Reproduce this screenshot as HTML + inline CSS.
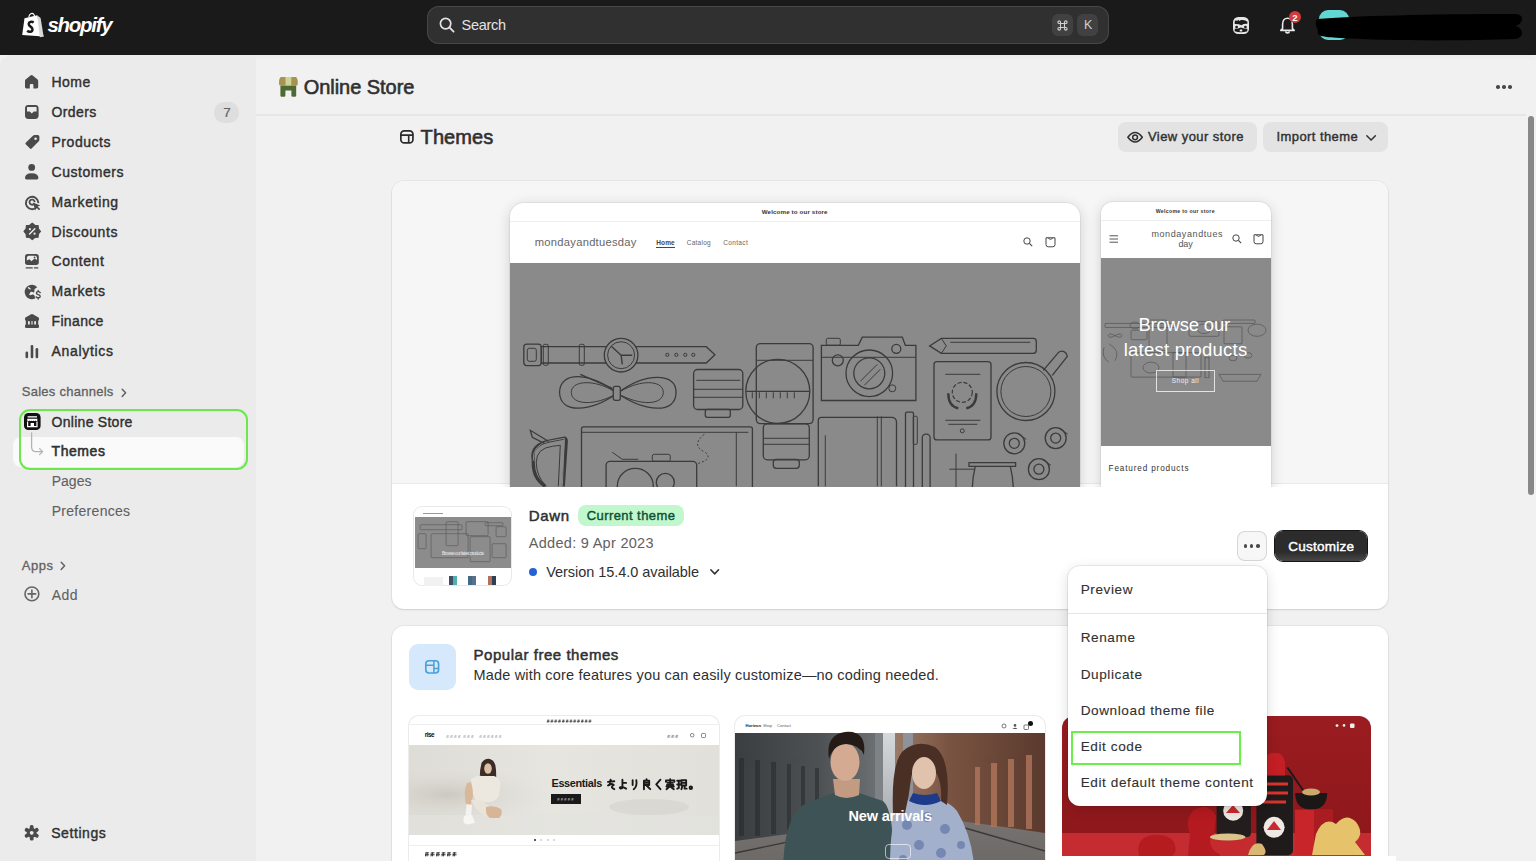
<!DOCTYPE html>
<html><head><meta charset="utf-8">
<style>
html,body{margin:0;padding:0;width:1536px;height:861px;overflow:hidden;background:#f1f1f1;}
body{position:relative;font-family:"Liberation Sans",sans-serif;}
.t{position:absolute;white-space:nowrap;}
.r{position:absolute;}
svg.r{overflow:visible;}
</style></head><body>
<div class="r" style="left:0px;top:0px;width:1536px;height:55px;background:#1a1a1a;"></div>
<svg class="r" style="left:21px;top:12px;" width="24" height="26" viewBox="0 0 24 26"><path d="M3.5 6.2 L16.2 3.2 L22.6 24.6 L1.2 23.0 Z" fill="#fff"/>
<path d="M16.2 3.2 L19.6 6.0 L22.6 24.6 L18.8 25.2 Z" fill="#d8d8d8"/>
<path d="M7.8 5.2 C8.2 1.5 11.2 0.6 12.6 2.2 C13.4 3.2 13.6 4.4 13.6 4.6" stroke="#fff" stroke-width="1.2" fill="none"/>
<path d="M12.6 10.6 C11 9.2 7.6 9.6 7.8 12.3 C8 14.8 11.8 14.6 11.5 17.6 C11.3 20.2 7.8 20.2 6.2 18.8" stroke="#1a1a1a" stroke-width="2.5" fill="none"/></svg>
<div class="t" style="left:47.4px;top:15.44px;font-size:20.5px;line-height:20.5px;font-weight:bold;color:#fff;letter-spacing:-1.282px;font-style:italic;">shopify</div>
<div class="r" style="left:427px;top:6px;width:682px;height:38px;background:#303030;border-radius:12px;box-shadow:inset 0 0 0 1px #474747;"></div>
<svg class="r" style="left:439px;top:17px;" width="16" height="16" viewBox="0 0 16 16"><circle cx="6.6" cy="6.6" r="5.2" stroke="#e3e3e3" stroke-width="1.7" fill="none"/><path d="M10.4 10.4 L14.6 14.6" stroke="#e3e3e3" stroke-width="1.8" stroke-linecap="round"/></svg>
<div class="t" style="left:461.5px;top:17.72px;font-size:14.5px;line-height:14.5px;color:#e3e3e3;letter-spacing:-0.289px;">Search</div>
<div class="r" style="left:1052px;top:14px;width:21px;height:22px;background:#414141;border-radius:6px;"></div>
<div class="r" style="left:1077px;top:14px;width:21px;height:22px;background:#414141;border-radius:6px;"></div>
<svg class="r" style="left:1056.5px;top:19.5px;" width="11" height="11" viewBox="0 0 11 11"><path d="M3.5 3.5 L7.5 3.5 L7.5 7.5 L3.5 7.5 Z M3.5 3.5 L3.5 2.2 A1.3 1.3 0 1 0 2.2 3.5 L3.5 3.5 M7.5 3.5 L7.5 2.2 A1.3 1.3 0 1 1 8.8 3.5 L7.5 3.5 M3.5 7.5 L3.5 8.8 A1.3 1.3 0 1 1 2.2 7.5 L3.5 7.5 M7.5 7.5 L7.5 8.8 A1.3 1.3 0 1 0 8.8 7.5 L7.5 7.5" stroke="#d0d0d0" stroke-width="1.1" fill="none"/></svg>
<div class="t" style="left:1084.0px;top:18.92px;font-size:12.5px;line-height:12.5px;color:#d0d0d0;">K</div>
<svg class="r" style="left:1232.5px;top:16.5px;" width="16" height="17.1" viewBox="0 0 16 17.1"><rect x="0" y="0" width="16" height="17.1" rx="5.2" fill="#e6e6e6"/><path d="M1.7 4.6 L3 2.9 L4 4.2 L5.2 2.7 L6.4 4 L8 3.1 Q12.4 2.6 14.4 4.8 L14.4 6.8 Q10.5 6.6 8.4 8.2 Q6 6.9 1.7 7 Z" fill="#1a1a1a"/><circle cx="3.6" cy="10" r="1.35" fill="#1a1a1a"/><circle cx="12.4" cy="10" r="1.35" fill="#1a1a1a"/><path d="M1.7 11.8 Q5 11.8 8 10.6 Q11 11.8 14.3 11.8 L14.3 14.3 Q8 16.2 1.7 14.3 Z" fill="#1a1a1a"/><rect x="6.7" y="12.4" width="2.6" height="2" rx="0.5" fill="#e6e6e6"/></svg>
<svg class="r" style="left:1278px;top:15px;" width="20" height="20" viewBox="0 0 20 20"><path d="M4.6 13.6 L4.6 9.2 C4.6 5.6 6.6 3.2 9.5 3.2 C12.4 3.2 14.4 5.6 14.4 9.2 L14.4 13.6 L16.2 15.4 L2.8 15.4 Z" stroke="#e8e8e8" stroke-width="1.6" fill="none" stroke-linejoin="round"/>
<path d="M7.6 16.4 C7.8 18.4 11.2 18.4 11.4 16.4" stroke="#e8e8e8" stroke-width="1.6" fill="none"/></svg>
<div class="r" style="left:1289.2px;top:11.3px;width:12px;height:12px;background:#d4393c;border-radius:50%;"></div>
<div class="t" style="left:1292.3px;top:13.26px;font-size:9.5px;line-height:9.5px;font-weight:bold;color:#fff;">2</div>
<div class="r" style="left:1319px;top:10px;width:30px;height:30px;background:#62d6d2;border-radius:9px;"></div>
<svg class="r" style="left:1310px;top:8px;" width="222" height="40" viewBox="0 0 222 40"><path d="M8 11 C40 8 120 6 205 6 C215 6 214 16 205 18 C214 20 215 30 205 31 C150 33 80 33 30 30 C12 29 6 28 8 22 C5 18 5 12 8 11 Z" fill="#000"/></svg>
<div class="r" style="left:0px;top:55px;width:256px;height:806px;background:#ebebeb;border-top-left-radius:12px;"></div>
<div class="r" style="left:256px;top:55px;width:1280px;height:806px;background:#f1f1f1;border-top-right-radius:12px;"></div>
<div class="r" style="left:256px;top:55px;width:1280px;height:5px;background:linear-gradient(#ebebeb,#efefef);border-top-right-radius:12px;"></div>
<div class="r" style="left:256px;top:114px;width:1270px;height:1.5px;background:#e6e6e6;"></div>
<div class="r" style="left:1527.5px;top:116px;width:6.5px;height:379px;background:#888;border-radius:3px;"></div>
<div class="t" style="left:51.5px;top:75.35px;font-size:14px;line-height:14px;-webkit-text-stroke:0.4px #303030;color:#303030;letter-spacing:0.485px;">Home</div>
<div class="t" style="left:51.5px;top:105.20px;font-size:14px;line-height:14px;-webkit-text-stroke:0.4px #303030;color:#303030;letter-spacing:0.402px;">Orders</div>
<div class="t" style="left:51.5px;top:135.05px;font-size:14px;line-height:14px;-webkit-text-stroke:0.4px #303030;color:#303030;letter-spacing:0.536px;">Products</div>
<div class="t" style="left:51.5px;top:164.90px;font-size:14px;line-height:14px;-webkit-text-stroke:0.4px #303030;color:#303030;letter-spacing:0.527px;">Customers</div>
<div class="t" style="left:51.5px;top:194.75px;font-size:14px;line-height:14px;-webkit-text-stroke:0.4px #303030;color:#303030;letter-spacing:0.641px;">Marketing</div>
<div class="t" style="left:51.5px;top:224.60px;font-size:14px;line-height:14px;-webkit-text-stroke:0.4px #303030;color:#303030;letter-spacing:0.554px;">Discounts</div>
<div class="t" style="left:51.5px;top:254.45px;font-size:14px;line-height:14px;-webkit-text-stroke:0.4px #303030;color:#303030;letter-spacing:0.544px;">Content</div>
<div class="t" style="left:51.5px;top:284.30px;font-size:14px;line-height:14px;-webkit-text-stroke:0.4px #303030;color:#303030;letter-spacing:0.602px;">Markets</div>
<div class="t" style="left:51.5px;top:314.15px;font-size:14px;line-height:14px;-webkit-text-stroke:0.4px #303030;color:#303030;letter-spacing:0.349px;">Finance</div>
<div class="t" style="left:51.5px;top:344.00px;font-size:14px;line-height:14px;-webkit-text-stroke:0.4px #303030;color:#303030;letter-spacing:0.672px;">Analytics</div>
<div class="r" style="left:214px;top:102px;width:25px;height:21px;background:#dedede;border-radius:10px;"></div>
<div class="t" style="left:223.3px;top:105.57px;font-size:13.5px;line-height:13.5px;-webkit-text-stroke:0.2px #616161;color:#616161;">7</div>
<div class="t" style="left:21.8px;top:385.09px;font-size:13px;line-height:13px;-webkit-text-stroke:0.3px #616161;color:#616161;letter-spacing:0.256px;">Sales channels</div>
<svg class="r" style="left:120.5px;top:387.5px;" width="6" height="10" viewBox="0 0 6 10"><path d="M1.2 1.2 L4.6 4.8 L1.2 8.4" stroke="#616161" stroke-width="1.5" fill="none" stroke-linecap="round" stroke-linejoin="round"/></svg>
<div class="r" style="left:13px;top:436.5px;width:231px;height:30px;background:#fafafa;border-radius:8px;"></div>
<div class="t" style="left:51.6px;top:414.95px;font-size:14px;line-height:14px;-webkit-text-stroke:0.4px #303030;color:#303030;letter-spacing:0.271px;">Online Store</div>
<div class="t" style="left:51.6px;top:444.05px;font-size:14px;line-height:14px;-webkit-text-stroke:0.55px #303030;color:#303030;letter-spacing:0.545px;">Themes</div>
<div class="t" style="left:51.7px;top:474.35px;font-size:14px;line-height:14px;-webkit-text-stroke:0.1px #616161;color:#616161;letter-spacing:0.026px;">Pages</div>
<div class="t" style="left:51.7px;top:504.25px;font-size:14px;line-height:14px;-webkit-text-stroke:0.1px #616161;color:#616161;letter-spacing:0.291px;">Preferences</div>
<div class="t" style="left:21.8px;top:558.59px;font-size:13px;line-height:13px;-webkit-text-stroke:0.3px #616161;color:#616161;letter-spacing:0.489px;">Apps</div>
<svg class="r" style="left:59.6px;top:561px;" width="6" height="10" viewBox="0 0 6 10"><path d="M1.2 1.2 L4.6 4.8 L1.2 8.4" stroke="#616161" stroke-width="1.5" fill="none" stroke-linecap="round" stroke-linejoin="round"/></svg>
<div class="t" style="left:51.7px;top:587.65px;font-size:14px;line-height:14px;-webkit-text-stroke:0.1px #616161;color:#616161;letter-spacing:0.494px;">Add</div>
<div class="t" style="left:51.2px;top:826.45px;font-size:14px;line-height:14px;-webkit-text-stroke:0.4px #303030;color:#303030;letter-spacing:0.573px;">Settings</div>
<svg class="r" style="left:25.4px;top:75.4px" width="13.2" height="13.4" viewBox="0 0 13.2 13.4"><path d="M5.5 0.5 Q6.6 -0.3 7.7 0.5 L12.6 4.6 Q13.2 5.1 13.2 6 L13.2 12 Q13.2 13.4 11.8 13.4 L8.4 13.4 L8.4 10 Q8.4 9 7.4 9 L5.8 9 Q4.8 9 4.8 10 L4.8 13.4 L1.4 13.4 Q0 13.4 0 12 L0 6 Q0 5.1 0.6 4.6 Z" fill="#4a4a4a"/></svg>
<svg class="r" style="left:25.2px;top:105.1px" width="13.6" height="14" viewBox="0 0 13.6 14"><rect x="0" y="0" width="13.6" height="14" rx="3.4" fill="#4a4a4a"/><path d="M2 2.6 Q2 2 2.6 2 L11 2 Q11.6 2 11.6 2.6 L11.6 6.6 L8.8 6.6 L6.8 8.4 L4.8 6.6 L2 6.6 Z" fill="#ebebeb"/></svg>
<svg class="r" style="left:24.9px;top:134.7px" width="14.4" height="14.3" viewBox="0 0 14.4 14.3"><path d="M8.2 0.6 Q8.8 0 9.6 0 L12.8 0 Q14.4 0 14.4 1.6 L14.4 4.8 Q14.4 5.6 13.8 6.2 L6.6 13.6 Q5.8 14.3 5 13.6 L0.7 9.3 Q0 8.5 0.7 7.7 Z" fill="#4a4a4a"/><circle cx="10.6" cy="3.8" r="1.3" fill="#ebebeb"/></svg>
<svg class="r" style="left:25.4px;top:164.4px" width="13.4" height="15.4" viewBox="0 0 13.4 15.4"><circle cx="6.7" cy="3.4" r="3.4" fill="#4a4a4a"/><path d="M0 14 Q0 9.3 6.7 9.3 Q13.4 9.3 13.4 14 Q13.4 15.4 12 15.4 L1.4 15.4 Q0 15.4 0 14 Z" fill="#4a4a4a"/></svg>
<svg class="r" style="left:25px;top:194.8px" width="16" height="16" viewBox="0 0 16 16"><path d="M11.5 12.4 A6.2 6.2 0 1 1 13.3 7.3" stroke="#4a4a4a" stroke-width="1.9" fill="none" stroke-linecap="round"/><path d="M8.7 9.2 A2.6 2.6 0 1 1 9.6 6.4" stroke="#4a4a4a" stroke-width="1.8" fill="none" stroke-linecap="round"/><path d="M7.8 7.4 L15.4 10.4 L12.6 11.4 L15.2 14 L14 15.2 L11.4 12.6 L10.4 15.4 Z" fill="#4a4a4a"/></svg>
<svg class="r" style="left:24px;top:223.2px" width="16.5" height="16.8" viewBox="0 0 16.5 16.8"><path d="M8.25 0.20 L10.78 2.30 L14.05 2.60 L14.35 5.87 L16.45 8.40 L14.35 10.93 L14.05 14.20 L10.78 14.50 L8.25 16.60 L5.72 14.50 L2.45 14.20 L2.15 10.93 L0.05 8.40 L2.15 5.87 L2.45 2.60 L5.72 2.30 Z" fill="#4a4a4a" stroke="#4a4a4a" stroke-width="1.2" stroke-linejoin="round"/><path d="M5.6 11 L10.8 5.8" stroke="#ebebeb" stroke-width="1.5" stroke-linecap="round"/><circle cx="5.9" cy="6.2" r="1.1" fill="#ebebeb"/><circle cx="10.6" cy="10.7" r="1.1" fill="#ebebeb"/></svg>
<svg class="r" style="left:25.2px;top:254.4px" width="13.8" height="14.6" viewBox="0 0 13.8 14.6"><rect x="0" y="0" width="13.8" height="10.9" rx="2.6" fill="#4a4a4a"/><path d="M1.8 4.6 Q1.8 1.8 4 1.8 L9.8 1.8 Q12 1.8 12 4 L12 6 L9.6 4.6 L6.4 7.2 L4.4 5.2 L1.8 6.6 Z" fill="#ebebeb"/><circle cx="9.6" cy="3.4" r="0.9" fill="#4a4a4a"/><rect x="0.6" y="13.2" width="7.2" height="1.3" rx="0.6" fill="#4a4a4a"/><rect x="8.8" y="13.2" width="4.6" height="1.3" rx="0.6" fill="#4a4a4a"/></svg>
<svg class="r" style="left:24.5px;top:284px" width="16.2" height="15.2" viewBox="0 0 16.2 15.2"><path d="M12.2 3.2 A7.2 7.2 0 1 0 10.4 14.2 L9.4 11.6 Q8.8 10.2 7.4 10.6 L5.4 11.2 Q4 11.4 4.4 10 L5.2 8.4 Q5.8 7.4 7 7.8 L8.6 8.4 Q9.4 8.6 9.4 7.6 L9.4 6 Q9.4 5 10.4 4.6 Z" fill="#4a4a4a"/><path d="M15.2 8.6 Q14.6 7.6 13.2 7.6 Q11.4 7.6 11.4 9 Q11.4 10.2 13.2 10.6 Q15.2 11 15.2 12.4 Q15.2 13.8 13.2 13.8 Q11.8 13.8 11.2 12.8 M13.2 6.4 L13.2 7.6 M13.2 13.8 L13.2 15" stroke="#4a4a4a" stroke-width="1.4" fill="none" stroke-linecap="round"/><path d="M3 3.4 L5.6 5.2" stroke="#ebebeb" stroke-width="1.3"/></svg>
<svg class="r" style="left:25px;top:313.7px" width="14" height="13.9" viewBox="0 0 14 13.9"><path d="M6.2 0.3 Q7 -0.1 7.8 0.3 L13.2 3.2 Q14 3.6 14 4.4 L14 5.4 Q14 6 13.4 6 L0.6 6 Q0 6 0 5.4 L0 4.4 Q0 3.6 0.8 3.2 Z" fill="#4a4a4a"/><rect x="0.8" y="6" width="2.2" height="5" fill="#4a4a4a"/><rect x="4.8" y="6" width="1.6" height="5" fill="#4a4a4a"/><rect x="7.6" y="6" width="1.6" height="5" fill="#4a4a4a"/><rect x="11" y="6" width="2.2" height="5" fill="#4a4a4a"/><rect x="0" y="10.4" width="14" height="3.5" rx="1.2" fill="#4a4a4a"/><rect x="0.6" y="6" width="12.8" height="1.2" fill="#4a4a4a"/></svg>
<svg class="r" style="left:24.8px;top:344.7px" width="14" height="13.2" viewBox="0 0 14 13.2"><rect x="0.5" y="6.4" width="2.6" height="6.8" rx="1.3" fill="#4a4a4a"/><rect x="5.7" y="0" width="2.6" height="13.2" rx="1.3" fill="#4a4a4a"/><rect x="10.6" y="3" width="2.6" height="10.2" rx="1.3" fill="#4a4a4a"/></svg>
<svg class="r" style="left:23.9px;top:412.9px" width="16.6" height="17.1" viewBox="0 0 16.6 17.1"><rect x="0" y="0" width="16.6" height="17.1" rx="4.4" fill="#111"/><rect x="3.6" y="3.2" width="9.4" height="1.3" fill="#fff"/><path d="M3.2 5.8 L13.4 5.8 L13.4 7.4 Q12.4 8.4 11.6 7.4 Q10.6 8.4 9.6 7.4 Q8.6 8.4 7.6 7.4 Q6.6 8.4 5.6 7.4 Q4.6 8.4 3.2 7.4 Z" fill="#fff"/><path d="M3.6 8.6 L3.6 13.6 L13 13.6 L13 8.6" stroke="#fff" stroke-width="1.2" fill="none"/><rect x="6.6" y="10" width="3.4" height="3.6" fill="#fff"/></svg>
<svg class="r" style="left:30px;top:432px" width="14" height="23" viewBox="0 0 14 23"><path d="M1.6 1 L1.6 15 Q1.6 19.6 6 19.6 L12.6 19.6 M9.6 16.6 L12.6 19.6 L9.6 22.6" stroke="#b3b3b3" stroke-width="1.3" fill="none" stroke-linecap="round" stroke-linejoin="round"/></svg>
<svg class="r" style="left:24px;top:586.4px" width="15.8" height="15.8" viewBox="0 0 15.8 15.8"><circle cx="7.9" cy="7.9" r="6.9" stroke="#666" stroke-width="1.6" fill="none"/><path d="M7.9 4.1 L7.9 11.7 M4.1 7.9 L11.7 7.9" stroke="#666" stroke-width="1.6" stroke-linecap="round"/></svg>
<svg class="r" style="left:24.2px;top:825.4px" width="15.4" height="15.6" viewBox="0 0 15.4 15.6"><g transform="translate(7.7 7.8)"><rect x="-1.9" y="-7.7" width="3.8" height="5" rx="1.6" transform="rotate(0)" fill="#4a4a4a"/><rect x="-1.9" y="-7.7" width="3.8" height="5" rx="1.6" transform="rotate(60)" fill="#4a4a4a"/><rect x="-1.9" y="-7.7" width="3.8" height="5" rx="1.6" transform="rotate(120)" fill="#4a4a4a"/><rect x="-1.9" y="-7.7" width="3.8" height="5" rx="1.6" transform="rotate(180)" fill="#4a4a4a"/><rect x="-1.9" y="-7.7" width="3.8" height="5" rx="1.6" transform="rotate(240)" fill="#4a4a4a"/><rect x="-1.9" y="-7.7" width="3.8" height="5" rx="1.6" transform="rotate(300)" fill="#4a4a4a"/><circle r="4.9" fill="#4a4a4a"/><circle r="1.9" fill="#ebebeb"/></g></svg>
<div class="r" style="left:18.6px;top:408.5px;width:229.4px;height:61px;border:2.6px solid #6ae84c;border-radius:11px;box-sizing:border-box;"></div>
<svg class="r" style="left:278.6px;top:76.9px;" width="18.8" height="19.8" viewBox="0 0 18.8 19.8"><path d="M1.6 0 L17.2 0 Q18.8 2 18.8 4.4 L18.8 7 Q18.8 8.8 17 8.8 L1.8 8.8 Q0 8.8 0 7 L0 4.4 Q0 2 1.6 0 Z" fill="#a89450"/><path d="M6.4 0 L12.4 0 L12.2 8.8 L6.6 8.8 Z" fill="#ccd49a"/><path d="M1.4 8.8 L17.2 8.8 L17.2 18.4 Q17.2 19.8 15.8 19.8 L13.8 19.8 Q12.4 19.8 12.4 18.4 L12.4 13.6 L6.4 13.6 L6.4 18.4 Q6.4 19.8 5 19.8 L2.8 19.8 Q1.4 19.8 1.4 18.4 Z" fill="#4d6a32"/></svg>
<div class="t" style="left:303.7px;top:76.87px;font-size:20px;line-height:20px;-webkit-text-stroke:0.6px #303030;color:#303030;letter-spacing:-0.043px;">Online Store</div>
<div class="r" style="left:1496.2px;top:85.1px;width:3.6px;height:3.6px;background:#4a4a4a;border-radius:50%;"></div>
<div class="r" style="left:1502.1000000000001px;top:85.1px;width:3.6px;height:3.6px;background:#4a4a4a;border-radius:50%;"></div>
<div class="r" style="left:1508.1000000000001px;top:85.1px;width:3.6px;height:3.6px;background:#4a4a4a;border-radius:50%;"></div>
<svg class="r" style="left:400.1px;top:130.1px;" width="13.8" height="13.7" viewBox="0 0 13.8 13.7"><rect x="0.85" y="0.85" width="12.1" height="12" rx="3.4" stroke="#2a2a2a" stroke-width="1.7" fill="none"/><path d="M0.8 5.1 L13 5.1 M8.7 5.1 L8.7 13" stroke="#2a2a2a" stroke-width="1.6"/></svg>
<div class="t" style="left:420.6px;top:127.17px;font-size:20px;line-height:20px;-webkit-text-stroke:0.6px #303030;color:#303030;letter-spacing:0.070px;">Themes</div>
<div class="r" style="left:1118.3px;top:122.2px;width:138.3px;height:29.6px;background:#e3e3e3;border-radius:8px;"></div>
<div class="r" style="left:1263.1px;top:122.2px;width:124.8px;height:29.6px;background:#e3e3e3;border-radius:8px;"></div>
<svg class="r" style="left:1126.8px;top:130.7px;" width="16.2" height="12.6" viewBox="0 0 16.2 12.6"><path d="M0.9 6.3 Q8.1 -3.2 15.3 6.3 Q8.1 15.8 0.9 6.3 Z" stroke="#303030" stroke-width="1.6" fill="none" stroke-linejoin="round"/><circle cx="8.1" cy="6.3" r="2.4" stroke="#303030" stroke-width="1.5" fill="none"/></svg>
<div class="t" style="left:1148.0px;top:130.19px;font-size:13px;line-height:13px;-webkit-text-stroke:0.4px #303030;color:#303030;letter-spacing:0.432px;">View your store</div>
<div class="t" style="left:1276.5px;top:130.29px;font-size:13px;line-height:13px;-webkit-text-stroke:0.4px #303030;color:#303030;letter-spacing:0.419px;">Import theme</div>
<svg class="r" style="left:1366.3px;top:135.1px;" width="10.2" height="5.9" viewBox="0 0 10.2 5.9"><path d="M0.8 0.8 L5.1 5.1 L9.4 0.8" stroke="#303030" stroke-width="1.5" fill="none" stroke-linecap="round" stroke-linejoin="round"/></svg>
<div class="r" style="left:391.5px;top:181px;width:996.5px;height:428px;background:#fff;border-radius:12px;box-shadow:0 0 0 1px rgba(0,0,0,0.045),0 1px 2px rgba(0,0,0,0.1);"></div>
<div class="r" style="left:391.5px;top:181px;width:996.5px;height:301.5px;background:#f6f6f6;border-radius:12px 12px 0 0;"></div>
<div class="r" style="left:391.5px;top:482.5px;width:996.5px;height:1.2px;background:#e9e9e9;"></div>
<div class="r" style="left:391.5px;top:181px;width:997px;height:305.5px;border-radius:12px 12px 0 0;overflow:hidden;">
<div class="r" style="left:118.19999999999999px;top:21.69999999999999px;width:570.6px;height:320px;background:#fff;border-radius:14px 14px 0 0;box-shadow:0 0 0 1px rgba(0,0,0,0.05),0 3px 14px rgba(0,0,0,0.16);overflow:hidden;">
<div class="t" style="left:252.0px;top:6.05px;font-size:6.2px;line-height:6.2px;font-weight:bold;color:#333;letter-spacing:0.143px;">Welcome to our store</div>
<div class="r" style="left:0px;top:18.7px;width:571px;height:0.8px;background:#eee;"></div>
<div class="t" style="left:25.1px;top:34.52px;font-size:11.2px;line-height:11.2px;color:#666;letter-spacing:0.263px;">mondayandtuesday</div>
<div class="t" style="left:146.5px;top:37.00px;font-size:6.5px;line-height:6.5px;font-weight:bold;color:#444;letter-spacing:0.147px;">Home</div>
<div class="r" style="left:146.5px;top:44.3px;width:18.6px;height:0.8px;background:#444;"></div>
<div class="t" style="left:177.0px;top:37.00px;font-size:6.5px;line-height:6.5px;color:#666;letter-spacing:0.266px;">Catalog</div>
<div class="t" style="left:213.5px;top:37.00px;font-size:6.5px;line-height:6.5px;color:#666;letter-spacing:0.350px;">Contact</div>
<svg class="r" style="left:513.8px;top:34.8px;" width="10" height="10" viewBox="0 0 10 10"><circle cx="4" cy="4" r="3.2" stroke="#444" stroke-width="1" fill="none"/><path d="M6.4 6.4 L9.2 9.2" stroke="#444" stroke-width="1.1"/></svg>
<svg class="r" style="left:535.5px;top:34.8px;" width="11" height="10.5" viewBox="0 0 11 10.5"><path d="M1 0.8 L10 0.8 L10 7.6 Q10 9.8 7.8 9.8 L3.2 9.8 Q1 9.8 1 7.6 Z M3.2 0.8 Q5.5 4 7.8 0.8" stroke="#444" stroke-width="1" fill="none"/></svg>
<div class="r" style="left:0px;top:60.5px;width:571px;height:260px;background:#8a8a8a;"></div>
<svg class="r" style="left:0px;top:0px;pointer-events:none;" width="571" height="320" viewBox="0 0 571 320"><rect x="13.800000000000011" y="141.10000000000002" width="17.5" height="21.5" rx="3" stroke="#3b3b3b" stroke-width="1.3" fill="none"/><rect x="17.30000000000001" y="145.3" width="9" height="13" rx="2" stroke="#3b3b3b" stroke-width="1" fill="none"/><path d="M31.30000000000001 143.7 L196.3 143.7 L204.90000000000003 151.8 L196.3 160.0 L31.30000000000001 160.0 Z" stroke="#3b3b3b" stroke-width="1.3" fill="none"/><rect x="33.30000000000001" y="141.3" width="5" height="21" rx="1.5" stroke="#3b3b3b" stroke-width="1" fill="none"/><rect x="69.30000000000001" y="141.3" width="5" height="21" rx="1.5" stroke="#3b3b3b" stroke-width="1" fill="none"/><circle cx="111.09999999999997" cy="152.2" r="16.8" fill="#8a8a8a" stroke="#3b3b3b" stroke-width="1.3" fill="none"/><circle cx="111.09999999999997" cy="152.2" r="13.5" stroke="#3b3b3b" stroke-width="1" fill="none"/><path d="M111.09999999999997 152.2 L101.30000000000001 143.3 M111.09999999999997 152.2 L122.30000000000001 152.2 M111.09999999999997 152.2 L112.30000000000001 161.3" stroke="#3b3b3b" stroke-width="1.4"/><circle cx="157.3" cy="151.8" r="1.6" stroke="#3b3b3b" stroke-width="1" fill="none"/><circle cx="166.3" cy="151.8" r="1.6" stroke="#3b3b3b" stroke-width="1" fill="none"/><circle cx="175.3" cy="151.8" r="1.6" stroke="#3b3b3b" stroke-width="1" fill="none"/><circle cx="183.3" cy="151.8" r="1.6" stroke="#3b3b3b" stroke-width="1" fill="none"/><path d="M107.30000000000001 190.3 C80.30000000000001 169.3 50.30000000000001 167.3 49.50000000000006 189.3 C50.30000000000001 211.3 80.30000000000001 209.3 107.30000000000001 190.3 C135.3 169.3 166.3 169.3 166.00000000000006 189.3 C166.3 211.3 135.3 209.3 107.30000000000001 190.3 Z" stroke="#3b3b3b" stroke-width="1.3" fill="none"/><path d="M107.30000000000001 190.3 C85.30000000000001 175.3 61.30000000000001 177.3 61.30000000000001 189.3 C61.30000000000001 202.3 85.30000000000001 203.3 107.30000000000001 190.3 C130.3 175.3 153.3 177.3 153.3 189.3 C153.3 202.3 130.3 203.3 107.30000000000001 190.3" stroke="#3b3b3b" stroke-width="1" fill="none"/><rect x="103.30000000000001" y="183.3" width="7" height="14" rx="2" fill="#8a8a8a" stroke="#3b3b3b" stroke-width="1.3" fill="none"/><path d="M70.30000000000001 171.3 L102.30000000000001 185.3" stroke="#3b3b3b" stroke-width="1.3" fill="none"/><rect x="183.59999999999997" y="166.5" width="49.2" height="40" rx="4" stroke="#3b3b3b" stroke-width="1.3" fill="none"/><path d="M183.59999999999997 186.3 L232.8 186.3 M183.59999999999997 194.3 L232.8 194.3 M186.3 177.3 L230.3 177.3" stroke="#3b3b3b" stroke-width="1" fill="none"/><rect x="195.3" y="206.3" width="25" height="8" rx="2" stroke="#3b3b3b" stroke-width="1.3" fill="none"/><rect x="246.3" y="140.60000000000002" width="56.8" height="80" rx="4" stroke="#3b3b3b" stroke-width="1.3" fill="none"/><path d="M246.3 157.3 L303.09999999999997 157.3" stroke="#3b3b3b" stroke-width="1" fill="none"/><rect x="253.3" y="220.8" width="46" height="36" rx="4" stroke="#3b3b3b" stroke-width="1.3" fill="none"/><path d="M253.3 235.3 L299.3 235.3 M253.3 241.3 L299.3 241.3" stroke="#3b3b3b" stroke-width="1" fill="none"/><rect x="263.3" y="256.3" width="26" height="9" rx="3" stroke="#3b3b3b" stroke-width="1.3" fill="none"/><circle cx="267.8" cy="188.3" r="32" fill="#8a8a8a" fill-opacity="0.0" stroke="#3b3b3b" stroke-width="1.3" fill="none"/><path d="M236.3 188.3 L299.3 188.3" stroke="#3b3b3b" stroke-width="1.3" fill="none"/><path d="M242.3 189.3 L242.3 195.3" stroke="#3b3b3b" stroke-width="1" fill="none"/><path d="M249.3 189.3 L249.3 195.3" stroke="#3b3b3b" stroke-width="1" fill="none"/><path d="M256.3 189.3 L256.3 195.3" stroke="#3b3b3b" stroke-width="1" fill="none"/><path d="M263.3 189.3 L263.3 195.3" stroke="#3b3b3b" stroke-width="1" fill="none"/><path d="M270.3 189.3 L270.3 195.3" stroke="#3b3b3b" stroke-width="1" fill="none"/><path d="M277.3 189.3 L277.3 195.3" stroke="#3b3b3b" stroke-width="1" fill="none"/><path d="M284.3 189.3 L284.3 195.3" stroke="#3b3b3b" stroke-width="1" fill="none"/><path d="M38.30000000000001 238.3 L53.30000000000001 235.3 Q56.30000000000001 234.3 56.30000000000001 238.3 L53.30000000000001 283.3 M23.30000000000001 257.3 Q20.30000000000001 242.3 38.30000000000001 238.3 M23.30000000000001 257.3 Q22.30000000000001 275.3 35.30000000000001 283.3" stroke="#3b3b3b" stroke-width="3.2" fill="none"/><path d="M38.30000000000001 238.3 L54.30000000000001 235.3 L52.30000000000001 283.3 M23.30000000000001 257.3 Q22.30000000000001 242.3 38.30000000000001 238.3" stroke="#8a8a8a" stroke-width="1" fill="none"/><path d="M38.30000000000001 238.3 L20.30000000000001 227.3 L22.30000000000001 234.3 L34.30000000000001 240.3" stroke="#3b3b3b" stroke-width="1.3" fill="none"/><path d="M26.30000000000001 259.3 Q26.30000000000001 245.3 42.30000000000001 243.3 L50.30000000000001 242.3 L48.30000000000001 283.3 M26.30000000000001 259.3 Q26.30000000000001 273.3 36.30000000000001 283.3" stroke="#3b3b3b" stroke-width="1" fill="none"/><rect x="71.50000000000006" y="223.90000000000003" width="170.9" height="80" rx="2" stroke="#3b3b3b" stroke-width="1.3" fill="none"/><path d="M71.50000000000006 229.3 L238.3 229.3 M226.3 229.3 L226.3 283.3" stroke="#3b3b3b" stroke-width="1" fill="none"/><path d="M194.3 231.3 Q180.3 242.3 195.3 249.3 Q205.3 257.3 180.3 262.3" stroke="#3b3b3b" stroke-width="1" fill="none" stroke-dasharray="2 2"/><rect x="96.09999999999997" y="258.3" width="90.6" height="40" rx="4" fill="#8a8a8a" stroke="#3b3b3b" stroke-width="1.3" fill="none"/><circle cx="125.30000000000001" cy="283.3" r="18" stroke="#3b3b3b" stroke-width="1.3" fill="none"/><circle cx="155.3" cy="279.3" r="9" stroke="#3b3b3b" stroke-width="1.3" fill="none"/><rect x="142.3" y="251.3" width="18" height="7" rx="2" stroke="#3b3b3b" stroke-width="1" fill="none"/><path d="M102.30000000000001 249.3 L112.30000000000001 256.3 L128.3 256.3" stroke="#3b3b3b" stroke-width="1" fill="none"/><path d="M311.40000000000003 142.3 L348.3 142.3 L352.3 134.10000000000002 L392.3 134.10000000000002 L395.3 142.3 L405.90000000000003 142.3 L405.90000000000003 197.5 L311.40000000000003 197.5 Z" stroke="#3b3b3b" stroke-width="1.3" fill="none"/><path d="M311.40000000000003 154.3 L405.90000000000003 154.3" stroke="#3b3b3b" stroke-width="1" fill="none"/><rect x="316.3" y="135.3" width="14" height="7" rx="1.5" stroke="#3b3b3b" stroke-width="1" fill="none"/><circle cx="359.3" cy="170.3" r="23.3" stroke="#3b3b3b" stroke-width="1.3" fill="none"/><circle cx="359.3" cy="170.3" r="15.5" stroke="#3b3b3b" stroke-width="1.3" fill="none"/><path d="M350.3 178.3 L367.3 161.3 M354.3 182.3 L370.3 166.3" stroke="#3b3b3b" stroke-width="1" fill="none"/><circle cx="327.8" cy="157.3" r="5.5" stroke="#3b3b3b" stroke-width="1.3" fill="none"/><circle cx="386.3" cy="145.8" r="4.5" stroke="#3b3b3b" stroke-width="1.3" fill="none"/><circle cx="382.3" cy="185.3" r="3.5" stroke="#3b3b3b" stroke-width="1" fill="none"/><path d="M431.3 135.40000000000003 L523.3 135.40000000000003 Q526.3 135.40000000000003 526.3 138.3 L526.3 147.3 Q526.3 150.40000000000003 523.3 150.40000000000003 L431.3 150.40000000000003 L419.59999999999997 142.90000000000003 Z" stroke="#3b3b3b" stroke-width="1.3" fill="none"/><path d="M431.3 135.40000000000003 L436.3 142.90000000000003 L431.3 150.40000000000003 M440.3 139.3 L520.3 139.3" stroke="#3b3b3b" stroke-width="1" fill="none"/><rect x="424.00000000000006" y="158.7" width="57" height="78.2" rx="3" stroke="#3b3b3b" stroke-width="1.3" fill="none"/><path d="M435.3 171.3 L470.3 171.3 M435.3 217.3 L470.3 217.3 M438.3 221.3 L467.3 221.3" stroke="#3b3b3b" stroke-width="1" fill="none"/><circle cx="452.3" cy="189.3" r="10" stroke="#3b3b3b" stroke-width="1.2" fill="none" stroke-dasharray="4 2"/><path d="M438.3 190.3 Q438.3 203.3 448.3 205.3 M466.3 190.3 Q466.3 203.3 456.3 205.3" stroke="#3b3b3b" stroke-width="2.4" fill="none"/><circle cx="452.3" cy="227.8" r="2" stroke="#3b3b3b" stroke-width="1" fill="none"/><path d="M533.3 167.3 L548.3 149.60000000000002 Q552.3 146.3 556.0999999999999 150.3 L557.3 153.3 L542.3 172.3" stroke="#3b3b3b" stroke-width="1.3" fill="none"/><circle cx="515.8999999999999" cy="188.5" r="29" stroke="#3b3b3b" stroke-width="1.3" fill="none"/><circle cx="515.8999999999999" cy="188.5" r="25" stroke="#3b3b3b" stroke-width="1" fill="none"/><circle cx="504.3" cy="240.3" r="10.5" stroke="#3b3b3b" stroke-width="1.3" fill="none"/><circle cx="504.3" cy="240.3" r="5" stroke="#3b3b3b" stroke-width="1.3" fill="none"/><path d="M507.3 230.3 L516.3 236.3" stroke="#3b3b3b" stroke-width="1" fill="none"/><circle cx="545.7" cy="235.10000000000002" r="10.5" stroke="#3b3b3b" stroke-width="1.3" fill="none"/><circle cx="545.7" cy="235.10000000000002" r="5" stroke="#3b3b3b" stroke-width="1.3" fill="none"/><path d="M548.7 225.10000000000002 L557.7 231.10000000000002" stroke="#3b3b3b" stroke-width="1" fill="none"/><circle cx="528.8999999999999" cy="266.2" r="10.5" stroke="#3b3b3b" stroke-width="1.3" fill="none"/><circle cx="528.8999999999999" cy="266.2" r="5" stroke="#3b3b3b" stroke-width="1.3" fill="none"/><path d="M531.8999999999999 256.2 L540.8999999999999 262.2" stroke="#3b3b3b" stroke-width="1" fill="none"/><path d="M308.3 283.3 L308.3 217.3 Q308.3 214.3 311.3 214.3 L381.3 214.3 Q386.50000000000006 214.3 386.50000000000006 219.3 L386.50000000000006 283.3" stroke="#3b3b3b" stroke-width="1.3" fill="none"/><path d="M367.3 213.3 L367.3 283.3 M371.3 213.3 L371.3 283.3 M315.3 232.3 L315.3 283.3" stroke="#3b3b3b" stroke-width="1" fill="none"/><rect x="395.50000000000006" y="209.2" width="8" height="80" rx="1.5" stroke="#3b3b3b" stroke-width="1.3" fill="none"/><rect x="403.3" y="213.3" width="4" height="28" rx="1" stroke="#3b3b3b" stroke-width="1" fill="none"/><rect x="412.3" y="231.2" width="7.8" height="60" rx="3.5" stroke="#3b3b3b" stroke-width="1.3" fill="none"/><path d="M459.00000000000006 259.7 L505.59999999999997 259.7 L505.59999999999997 263.3 L459.00000000000006 263.3 Z M465.3 263.3 Q462.3 275.3 462.3 287.3 M500.3 263.3 Q503.3 275.3 503.3 287.3" stroke="#3b3b3b" stroke-width="1.3" fill="none"/><path d="M446.00000000000006 250.60000000000002 L446.00000000000006 287.3 M439.3 266.2 L464.09999999999997 266.2" stroke="#3b3b3b" stroke-width="1" fill="none"/></svg>
</div>
<div class="r" style="left:709.7px;top:21.30000000000001px;width:169.5px;height:320px;background:#fff;border-radius:12px 12px 0 0;box-shadow:0 0 0 1px rgba(0,0,0,0.05),0 3px 14px rgba(0,0,0,0.16);overflow:hidden;">
<div class="t" style="left:54.5px;top:6.90px;font-size:5.2px;line-height:5.2px;font-weight:bold;color:#333;letter-spacing:0.312px;">Welcome to our store</div>
<div class="r" style="left:0px;top:17.8px;width:170px;height:0.8px;background:#eee;"></div>
<svg class="r" style="left:7.6px;top:32.6px;" width="10" height="8" viewBox="0 0 10 8"><path d="M0.5 0.8 L9 0.8 M0.5 4 L9 4 M0.5 7.2 L9 7.2" stroke="#555" stroke-width="1"/></svg>
<div class="t" style="left:50.2px;top:27.98px;font-size:9px;line-height:9px;color:#555;letter-spacing:0.596px;">mondayandtues</div>
<div class="t" style="left:77.2px;top:37.58px;font-size:9px;line-height:9px;color:#555;letter-spacing:-0.006px;">day</div>
<svg class="r" style="left:131px;top:31.5px;" width="10" height="10" viewBox="0 0 10 10"><circle cx="4" cy="4" r="3.2" stroke="#444" stroke-width="1" fill="none"/><path d="M6.4 6.4 L9.2 9.2" stroke="#444" stroke-width="1.1"/></svg>
<svg class="r" style="left:152.3px;top:31.5px;" width="11" height="10.5" viewBox="0 0 11 10.5"><path d="M1 0.8 L10 0.8 L10 7.6 Q10 9.8 7.8 9.8 L3.2 9.8 Q1 9.8 1 7.6 Z M3.2 0.8 Q5.5 4 7.8 0.8" stroke="#444" stroke-width="1" fill="none"/></svg>
<div class="r" style="left:0px;top:56px;width:170px;height:187.5px;background:#8a8a8a;"></div>
<svg class="r" style="left:0px;top:0px;" width="170" height="320" viewBox="0 0 170 320"><g transform="translate(0 118) scale(1 0.68) translate(0 -120)"><rect x="4" y="125" width="70" height="6" rx="1" stroke="#4a4a4a" stroke-width="0.7" fill="none"/><circle cx="34" cy="128" r="5" stroke="#4a4a4a" stroke-width="0.7" fill="none"/><path d="M14 143 C5 135 5 151 14 143 C23 135 23 151 14 143" stroke="#4a4a4a" stroke-width="0.7" fill="none"/><rect x="30" y="135" width="16" height="14" rx="2" stroke="#4a4a4a" stroke-width="0.7" fill="none"/><rect x="48" y="120" width="18" height="45" rx="2" stroke="#4a4a4a" stroke-width="0.7" fill="none"/><rect x="88" y="122" width="30" height="22" rx="2" stroke="#4a4a4a" stroke-width="0.7" fill="none"/><circle cx="103" cy="133" r="7" stroke="#4a4a4a" stroke-width="0.7" fill="none"/><rect x="122" y="120" width="32" height="5" rx="1" stroke="#4a4a4a" stroke-width="0.7" fill="none"/><rect x="123" y="130" width="18" height="25" rx="1" stroke="#4a4a4a" stroke-width="0.7" fill="none"/><circle cx="156" cy="135" r="9" stroke="#4a4a4a" stroke-width="0.7" fill="none"/><path d="M8 155 Q20 165 14 180 M3 160 Q0 175 8 182" stroke="#4a4a4a" stroke-width="0.7" fill="none"/><rect x="30" y="168" width="55" height="36" rx="1" stroke="#4a4a4a" stroke-width="0.7" fill="none"/><circle cx="50" cy="190" r="8" stroke="#4a4a4a" stroke-width="0.7" fill="none"/><rect x="72" y="168" width="28" height="36" rx="1" stroke="#4a4a4a" stroke-width="0.7" fill="none"/><rect x="104" y="175" width="4" height="30" stroke="#4a4a4a" stroke-width="0.7" fill="none"/><circle cx="132" cy="176" r="4" stroke="#4a4a4a" stroke-width="0.7" fill="none"/><circle cx="147" cy="172" r="4" stroke="#4a4a4a" stroke-width="0.7" fill="none"/><path d="M118 200 L160 200 L156 210 L122 210 Z" stroke="#4a4a4a" stroke-width="0.7" fill="none"/></g></svg>
<div class="t" style="left:37.2px;top:113.64px;font-size:18.5px;line-height:18.5px;color:#fff;letter-spacing:-0.197px;font-weight:300;">Browse our</div>
<div class="t" style="left:22.5px;top:138.64px;font-size:18.5px;line-height:18.5px;color:#fff;letter-spacing:0.227px;">latest products</div>
<div class="r" style="left:54.8px;top:167.8px;width:59px;height:22px;border:1px solid rgba(255,255,255,0.75);box-sizing:border-box;"></div>
<div class="t" style="left:70.5px;top:176.00px;font-size:6.5px;line-height:6.5px;color:#eee;letter-spacing:0.501px;">Shop all</div>
<div class="t" style="left:7.4px;top:262.56px;font-size:8.2px;line-height:8.2px;color:#333;letter-spacing:0.841px;">Featured products</div>
</div>
</div>
<div class="r" style="left:413.9px;top:507.3px;width:97.3px;height:78.2px;background:#fff;border-radius:8px;box-shadow:0 0 0 1px rgba(0,0,0,0.09);overflow:hidden;"></div>
<div class="r" style="left:414.5px;top:516.9px;width:96px;height:51px;background:#8c8c8c;"></div>
<div class="r" style="left:424px;top:577px;width:19px;height:8.5px;background:#f1f1f1;"></div>
<div class="r" style="left:449px;top:576px;width:4px;height:9px;background:#3e4f66;"></div>
<div class="r" style="left:453px;top:576px;width:4px;height:9px;background:#4fb0b0;"></div>
<div class="r" style="left:468px;top:576px;width:4px;height:9px;background:#3f6b86;"></div>
<div class="r" style="left:472px;top:576px;width:4px;height:9px;background:#5a6f88;"></div>
<div class="r" style="left:488px;top:576px;width:4px;height:9px;background:#b0725a;"></div>
<div class="r" style="left:492px;top:576px;width:4px;height:9px;background:#2f3f55;"></div>
<div class="r" style="left:423px;top:512.7px;width:20px;height:1px;background:#999;"></div>
<svg class="r" style="left:413.9px;top:507.3px;" width="97.3" height="78.2" viewBox="0 0 97.3 78.2"><rect x="6.100000000000023" y="17.69999999999999" width="42" height="5" rx="1" stroke="#555" stroke-width="0.6" fill="none"/><rect x="32.10000000000002" y="14.699999999999989" width="12" height="24" rx="1" stroke="#555" stroke-width="0.6" fill="none"/><rect x="52.10000000000002" y="14.699999999999989" width="22" height="14" rx="1" stroke="#555" stroke-width="0.6" fill="none"/><rect x="71.10000000000002" y="15.699999999999989" width="18" height="3" rx="1" stroke="#555" stroke-width="0.6" fill="none"/><rect x="82.10000000000002" y="19.69999999999999" width="10" height="10" rx="1" stroke="#555" stroke-width="0.6" fill="none"/><rect x="4.100000000000023" y="26.69999999999999" width="8" height="15" rx="1" stroke="#555" stroke-width="0.6" fill="none"/><rect x="17.100000000000023" y="26.69999999999999" width="37" height="24" rx="1" stroke="#555" stroke-width="0.6" fill="none"/><rect x="56.10000000000002" y="29.69999999999999" width="20" height="25" rx="1" stroke="#555" stroke-width="0.6" fill="none"/><rect x="78.10000000000002" y="36.69999999999999" width="14" height="14" rx="1" stroke="#555" stroke-width="0.6" fill="none"/></svg>
<div class="t" style="left:442.0px;top:551.69px;font-size:4.5px;line-height:4.5px;color:#eee;letter-spacing:-0.451px;">Browse our latest products</div>
<div class="t" style="left:528.8px;top:508.10px;font-size:15px;line-height:15px;-webkit-text-stroke:0.5px #303030;color:#303030;letter-spacing:0.650px;">Dawn</div>
<div class="r" style="left:578.2px;top:504.8px;width:106px;height:21.1px;background:#c1f7cd;border-radius:8px;"></div>
<div class="t" style="left:586.7px;top:508.99px;font-size:13px;line-height:13px;-webkit-text-stroke:0.4px #0c5132;color:#0c5132;letter-spacing:0.434px;">Current theme</div>
<div class="t" style="left:528.8px;top:536.32px;font-size:14.5px;line-height:14.5px;color:#616161;letter-spacing:0.286px;">Added: 9 Apr 2023</div>
<div class="r" style="left:528.5px;top:567.8px;width:8.6px;height:8.6px;background:#2463d1;border-radius:50%;"></div>
<div class="t" style="left:546.2px;top:565.12px;font-size:14.5px;line-height:14.5px;color:#303030;letter-spacing:-0.047px;">Version 15.4.0 available</div>
<svg class="r" style="left:710.3px;top:569.4px;" width="9.4" height="6.2" viewBox="0 0 9.4 6.2"><path d="M0.8 0.8 L4.7 4.9 L8.6 0.8" stroke="#303030" stroke-width="1.5" fill="none" stroke-linecap="round" stroke-linejoin="round"/></svg>
<div class="r" style="left:1237.2px;top:530.9px;width:29.4px;height:29.7px;background:#f7f7f7;border-radius:8px;box-shadow:inset 0 0 0 1px #d6d6d6;"></div>
<div class="r" style="left:1243.7px;top:544.2px;width:3.6px;height:3.6px;background:#4a4a4a;border-radius:50%;"></div>
<div class="r" style="left:1249.8px;top:544.2px;width:3.6px;height:3.6px;background:#4a4a4a;border-radius:50%;"></div>
<div class="r" style="left:1256.0px;top:544.2px;width:3.6px;height:3.6px;background:#4a4a4a;border-radius:50%;"></div>
<div class="r" style="left:1275px;top:531.2px;width:92px;height:29.6px;background:linear-gradient(#2c2c2c 70%,#474747);border-radius:8px;box-shadow:0 0 0 1px #151515;"></div>
<div class="t" style="left:1288.2px;top:539.57px;font-size:13.5px;line-height:13.5px;-webkit-text-stroke:0.45px #fff;color:#fff;letter-spacing:0.241px;">Customize</div>
<div class="r" style="left:392px;top:626px;width:996px;height:300px;background:#fff;border-radius:12px;box-shadow:0 0 0 1px rgba(0,0,0,0.045),0 1px 2px rgba(0,0,0,0.1);"></div>
<div class="r" style="left:409px;top:643.5px;width:46.8px;height:46.9px;background:#d6e8fc;border-radius:9px;"></div>
<svg class="r" style="left:425.2px;top:660.2px;" width="14.4" height="13.8" viewBox="0 0 14.4 13.8"><rect x="0.8" y="0.8" width="12.8" height="12.2" rx="3.2" stroke="#4a9fd6" stroke-width="1.6" fill="none"/><path d="M8.9 0.8 L8.9 13 M0.8 5.3 L8.9 5.3 M8.9 8.4 L13.6 8.4" stroke="#4a9fd6" stroke-width="1.5"/></svg>
<div class="t" style="left:473.5px;top:646.90px;font-size:15px;line-height:15px;-webkit-text-stroke:0.5px #303030;color:#303030;letter-spacing:0.540px;">Popular free themes</div>
<div class="t" style="left:473.5px;top:668.32px;font-size:14.5px;line-height:14.5px;color:#303030;letter-spacing:0.176px;">Made with core features you can easily customize—no coding needed.</div>
<div class="r" style="left:408.7px;top:715.5px;width:309.9px;height:160px;background:#fff;border-radius:10px 10px 0 0;box-shadow:0 0 0 1px rgba(0,0,0,0.08);overflow:hidden;">
<svg class="r" style="left:0px;top:0px;" width="310" height="30" viewBox="0 0 310 30"><path d="M138.04 4.21 L140.56 4.21 M139.30 3.74 L139.30 6.62 M137.93 5.54 L140.67 5.54 M138.40 4.64 L138.22 6.62" stroke="#333" stroke-width="0.61" fill="none"/><path d="M141.84 4.21 L144.36 4.21 M143.10 3.74 L143.10 6.62 M141.73 5.54 L144.47 5.54 M142.20 4.64 L142.02 6.62" stroke="#333" stroke-width="0.61" fill="none"/><path d="M145.64 4.21 L148.16 4.21 M146.90 3.74 L146.90 6.62 M145.53 5.54 L148.27 5.54 M146.00 4.64 L145.82 6.62" stroke="#333" stroke-width="0.61" fill="none"/><path d="M149.44 4.21 L151.96 4.21 M150.70 3.74 L150.70 6.62 M149.33 5.54 L152.07 5.54 M149.80 4.64 L149.62 6.62" stroke="#333" stroke-width="0.61" fill="none"/><path d="M153.24 4.21 L155.76 4.21 M154.50 3.74 L154.50 6.62 M153.13 5.54 L155.87 5.54 M153.60 4.64 L153.42 6.62" stroke="#333" stroke-width="0.61" fill="none"/><path d="M157.04 4.21 L159.56 4.21 M158.30 3.74 L158.30 6.62 M156.93 5.54 L159.67 5.54 M157.40 4.64 L157.22 6.62" stroke="#333" stroke-width="0.61" fill="none"/><path d="M160.84 4.21 L163.36 4.21 M162.10 3.74 L162.10 6.62 M160.73 5.54 L163.47 5.54 M161.20 4.64 L161.02 6.62" stroke="#333" stroke-width="0.61" fill="none"/><path d="M164.64 4.21 L167.16 4.21 M165.90 3.74 L165.90 6.62 M164.53 5.54 L167.27 5.54 M165.00 4.64 L164.82 6.62" stroke="#333" stroke-width="0.61" fill="none"/><path d="M168.44 4.21 L170.96 4.21 M169.70 3.74 L169.70 6.62 M168.33 5.54 L171.07 5.54 M168.80 4.64 L168.62 6.62" stroke="#333" stroke-width="0.61" fill="none"/><path d="M172.24 4.21 L174.76 4.21 M173.50 3.74 L173.50 6.62 M172.13 5.54 L174.87 5.54 M172.60 4.64 L172.42 6.62" stroke="#333" stroke-width="0.61" fill="none"/><path d="M176.04 4.21 L178.56 4.21 M177.30 3.74 L177.30 6.62 M175.93 5.54 L178.67 5.54 M176.40 4.64 L176.22 6.62" stroke="#333" stroke-width="0.61" fill="none"/><path d="M179.84 4.21 L182.36 4.21 M181.10 3.74 L181.10 6.62 M179.73 5.54 L182.47 5.54 M180.20 4.64 L180.02 6.62" stroke="#333" stroke-width="0.61" fill="none"/><path d="M37.54 19.61 L40.06 19.61 M38.80 19.14 L38.80 22.02 M37.43 20.94 L40.17 20.94 M37.90 20.04 L37.72 22.02" stroke="#999" stroke-width="0.36" fill="none"/><path d="M41.44 19.61 L43.96 19.61 M42.70 19.14 L42.70 22.02 M41.33 20.94 L44.07 20.94 M41.80 20.04 L41.62 22.02" stroke="#999" stroke-width="0.36" fill="none"/><path d="M45.34 19.61 L47.86 19.61 M46.60 19.14 L46.60 22.02 M45.23 20.94 L47.97 20.94 M45.70 20.04 L45.52 22.02" stroke="#999" stroke-width="0.36" fill="none"/><path d="M49.24 19.61 L51.76 19.61 M50.50 19.14 L50.50 22.02 M49.13 20.94 L51.87 20.94 M49.60 20.04 L49.42 22.02" stroke="#999" stroke-width="0.36" fill="none"/><path d="M54.54 19.61 L57.06 19.61 M55.80 19.14 L55.80 22.02 M54.43 20.94 L57.17 20.94 M54.90 20.04 L54.72 22.02" stroke="#999" stroke-width="0.36" fill="none"/><path d="M58.44 19.61 L60.96 19.61 M59.70 19.14 L59.70 22.02 M58.33 20.94 L61.07 20.94 M58.80 20.04 L58.62 22.02" stroke="#999" stroke-width="0.36" fill="none"/><path d="M62.34 19.61 L64.86 19.61 M63.60 19.14 L63.60 22.02 M62.23 20.94 L64.97 20.94 M62.70 20.04 L62.52 22.02" stroke="#999" stroke-width="0.36" fill="none"/><path d="M70.54 19.61 L73.06 19.61 M71.80 19.14 L71.80 22.02 M70.43 20.94 L73.17 20.94 M70.90 20.04 L70.72 22.02" stroke="#999" stroke-width="0.36" fill="none"/><path d="M74.44 19.61 L76.96 19.61 M75.70 19.14 L75.70 22.02 M74.33 20.94 L77.07 20.94 M74.80 20.04 L74.62 22.02" stroke="#999" stroke-width="0.36" fill="none"/><path d="M78.34 19.61 L80.86 19.61 M79.60 19.14 L79.60 22.02 M78.23 20.94 L80.97 20.94 M78.70 20.04 L78.52 22.02" stroke="#999" stroke-width="0.36" fill="none"/><path d="M82.24 19.61 L84.76 19.61 M83.50 19.14 L83.50 22.02 M82.13 20.94 L84.87 20.94 M82.60 20.04 L82.42 22.02" stroke="#999" stroke-width="0.36" fill="none"/><path d="M86.14 19.61 L88.66 19.61 M87.40 19.14 L87.40 22.02 M86.03 20.94 L88.77 20.94 M86.50 20.04 L86.32 22.02" stroke="#999" stroke-width="0.36" fill="none"/><path d="M90.04 19.61 L92.56 19.61 M91.30 19.14 L91.30 22.02 M89.93 20.94 L92.67 20.94 M90.40 20.04 L90.22 22.02" stroke="#999" stroke-width="0.36" fill="none"/><path d="M258.57 19.46 L261.23 19.46 M259.90 18.97 L259.90 22.01 M258.46 20.87 L261.34 20.87 M258.95 19.92 L258.76 22.01" stroke="#555" stroke-width="0.38" fill="none"/><path d="M262.57 19.46 L265.23 19.46 M263.90 18.97 L263.90 22.01 M262.46 20.87 L265.34 20.87 M262.95 19.92 L262.76 22.01" stroke="#555" stroke-width="0.38" fill="none"/><path d="M266.57 19.46 L269.23 19.46 M267.90 18.97 L267.90 22.01 M266.46 20.87 L269.34 20.87 M266.95 19.92 L266.76 22.01" stroke="#555" stroke-width="0.38" fill="none"/></svg>
<div class="r" style="left:0px;top:8.8px;width:310px;height:0.6px;background:#eee;"></div>
<div class="t" style="left:16.0px;top:16.00px;font-size:6.5px;line-height:6.5px;font-weight:bold;color:#111;letter-spacing:-0.522px;">rise</div>
<svg class="r" style="left:281px;top:17px;" width="5" height="5" viewBox="0 0 5 5"><circle cx="2.2" cy="2.2" r="1.8" stroke="#555" stroke-width="0.7" fill="none"/></svg>
<svg class="r" style="left:292px;top:17px;" width="5" height="5" viewBox="0 0 5 5"><rect x="0.5" y="0.5" width="4" height="4" rx="0.8" stroke="#555" stroke-width="0.7" fill="none"/></svg>
<svg class="r" style="left:0px;top:29.4px;" width="310" height="90.1" viewBox="0 0 310 90.1"><defs><radialGradient id="rsh" cx="0.12" cy="0.55" r="0.35"><stop offset="0" stop-color="#cdc9c1"/><stop offset="1" stop-color="#e2e1dc" stop-opacity="0"/></radialGradient>
<linearGradient id="rbg" x1="0" y1="0" x2="1" y2="0"><stop offset="0" stop-color="#dedcd6"/><stop offset="0.45" stop-color="#e6e5e0"/><stop offset="1" stop-color="#e1e0db"/></linearGradient></defs>
<rect width="310" height="90.1" fill="url(#rbg)"/><rect width="310" height="90.1" fill="url(#rsh)"/>
<ellipse cx="240" cy="62" rx="40" ry="8" fill="#d6d4ce" opacity="0.7"/>
<rect y="70" width="310" height="20.1" fill="#e4e3df" opacity="0.5"/></svg>
<svg class="r" style="left:0px;top:0px;" width="310" height="120" viewBox="0 0 310 120"><path d="M72.5 47 Q76 42 81 43 Q87 45 87 54 L87.5 70 Q84 73 81 70 L80 62 L77 62 L76 70 Q73 72 71 70 Q70 56 72.5 47 Z" fill="#3b2c25"/>
<ellipse cx="79" cy="52.5" rx="3.8" ry="5.2" fill="#dcc0a6"/>
<path d="M62 63 Q68 59 73 60 L85 60 Q90 61 91.5 68 L90 80 Q86 86 80 86 L68 86 Q62 80 62 63 Z" fill="#ede8df"/>
<path d="M58 67 Q54 76 57 88 L61 90 L64 80 Q64 72 62 66 Z" fill="#d9b89a"/>
<path d="M62 84 Q72 82 80 90 L83 98 L75 100 L66 92 Z" fill="#e9e4da"/>
<path d="M57.5 88 L56.5 100 L62 101 L63 89 Z" fill="#f4f2ee"/>
<path d="M55 100 Q53 108 58 108.5 L66 107 L63 99 Z" fill="#f7f6f3"/>
<path d="M77 91 Q85 89 92 93 Q94 99 90 102 L81 102 Q76 99 77 91 Z" fill="#d7b596"/></svg>
<div class="t" style="left:142.8px;top:62.47px;font-size:10.9px;line-height:10.9px;font-weight:bold;color:#1a1a1a;letter-spacing:-0.347px;">Essentials</div>
<svg class="r" style="left:196px;top:60px;" width="100" height="16" viewBox="0 0 100 16"><path d="M 3.00 5.83 L 9.30 5.30 M 5.63 3.73 L 4.58 8.98 M 3.00 9.50 Q 6.15 6.88 8.78 8.98 Q 4.58 11.07 9.30 13.18" stroke="#1a1a1a" stroke-width="1.9" fill="none" stroke-linecap="round" stroke-linejoin="round"/><path d="M 17.43 3.73 L 17.43 12.12 Q 14.80 13.18 14.80 11.60 Q 16.90 10.03 21.10 12.65 M 17.43 6.88 L 21.10 6.88" stroke="#1a1a1a" stroke-width="1.9" fill="none" stroke-linecap="round" stroke-linejoin="round"/><path d="M 27.65 4.25 L 27.65 8.98 M 31.32 4.25 Q 32.38 10.55 28.70 13.18" stroke="#1a1a1a" stroke-width="1.9" fill="none" stroke-linecap="round" stroke-linejoin="round"/><path d="M 41.55 3.20 L 41.55 4.78 M 38.93 4.78 L 44.18 4.78 L 44.18 8.98 L 38.93 8.98 Z M 38.93 6.88 L 44.18 6.88 M 38.93 8.98 L 38.93 13.18 M 41.55 9.50 L 45.23 13.18" stroke="#1a1a1a" stroke-width="1.9" fill="none" stroke-linecap="round" stroke-linejoin="round"/><path d="M 55.45 3.73 L 51.25 8.45 L 55.45 13.18" stroke="#1a1a1a" stroke-width="1.9" fill="none" stroke-linecap="round" stroke-linejoin="round"/><path d="M 65.15 3.20 L 65.15 4.46 M 60.95 5.83 L 60.95 4.46 L 69.35 4.46 L 69.35 5.83 M 62.52 6.88 L 67.78 6.88 M 62.00 8.98 L 68.30 8.98 M 65.15 5.30 L 65.15 10.03 M 61.48 10.55 L 68.83 10.55 M 65.15 10.03 L 61.48 13.18 M 65.15 10.55 L 68.83 13.18" stroke="#1a1a1a" stroke-width="1.9" fill="none" stroke-linecap="round" stroke-linejoin="round"/><path d="M 72.23 4.78 L 75.38 4.78 M 72.23 8.45 L 75.38 8.45 M 73.80 4.78 L 73.80 12.12 L 72.23 12.65 M 76.43 4.25 L 81.15 4.25 L 81.15 9.50 L 76.43 9.50 Z M 76.43 6.88 L 81.15 6.88 M 77.48 9.50 L 76.43 13.18 M 79.58 9.50 L 79.58 12.65 L 81.68 12.65" stroke="#1a1a1a" stroke-width="1.9" fill="none" stroke-linecap="round" stroke-linejoin="round"/><circle cx="85.81" cy="11.81" r="1.26" stroke="#1a1a1a" stroke-width="1.9" fill="none"/></svg>
<div class="r" style="left:142.3px;top:78.5px;width:29.9px;height:10px;background:#1a1a1a;"></div>
<svg class="r" style="left:148px;top:80px;" width="20" height="6" viewBox="0 0 20 6"><path d="M0.48 2.50 L2.72 2.50 M1.60 2.08 L1.60 4.64 M0.38 3.68 L2.82 3.68 M0.80 2.88 L0.64 4.64" stroke="#ddd" stroke-width="0.32" fill="none"/><path d="M3.98 2.50 L6.22 2.50 M5.10 2.08 L5.10 4.64 M3.88 3.68 L6.32 3.68 M4.30 2.88 L4.14 4.64" stroke="#ddd" stroke-width="0.32" fill="none"/><path d="M7.48 2.50 L9.72 2.50 M8.60 2.08 L8.60 4.64 M7.38 3.68 L9.82 3.68 M7.80 2.88 L7.64 4.64" stroke="#ddd" stroke-width="0.32" fill="none"/><path d="M10.98 2.50 L13.22 2.50 M12.10 2.08 L12.10 4.64 M10.88 3.68 L13.32 3.68 M11.30 2.88 L11.14 4.64" stroke="#ddd" stroke-width="0.32" fill="none"/><path d="M14.48 2.50 L16.72 2.50 M15.60 2.08 L15.60 4.64 M14.38 3.68 L16.82 3.68 M14.80 2.88 L14.64 4.64" stroke="#ddd" stroke-width="0.32" fill="none"/></svg>
<div class="r" style="left:0px;top:119.5px;width:310px;height:10px;background:#fff;"></div>
<div class="r" style="left:125px;top:123.5px;width:2px;height:2px;background:#222;border-radius:50%;"></div>
<div class="r" style="left:131.5px;top:123.5px;width:2px;height:2px;background:#ccc;border-radius:50%;"></div>
<div class="r" style="left:138px;top:123.5px;width:2px;height:2px;background:#ccc;border-radius:50%;"></div>
<div class="r" style="left:144.5px;top:123.5px;width:2px;height:2px;background:#ccc;border-radius:50%;"></div>
<div class="r" style="left:0px;top:129.5px;width:310px;height:0.6px;background:#eee;"></div>
<svg class="r" style="left:15px;top:133px;" width="40" height="10" viewBox="0 0 40 10"><path d="M1.28 3.86 L4.92 3.86 M3.10 3.18 L3.10 7.34 M1.12 5.78 L5.08 5.78 M1.80 4.48 L1.54 7.34" stroke="#222" stroke-width="0.88" fill="none"/><path d="M6.78 3.86 L10.42 3.86 M8.60 3.18 L8.60 7.34 M6.62 5.78 L10.58 5.78 M7.30 4.48 L7.04 7.34" stroke="#222" stroke-width="0.88" fill="none"/><path d="M12.28 3.86 L15.92 3.86 M14.10 3.18 L14.10 7.34 M12.12 5.78 L16.08 5.78 M12.80 4.48 L12.54 7.34" stroke="#222" stroke-width="0.88" fill="none"/><path d="M17.78 3.86 L21.42 3.86 M19.60 3.18 L19.60 7.34 M17.62 5.78 L21.58 5.78 M18.30 4.48 L18.04 7.34" stroke="#222" stroke-width="0.88" fill="none"/><path d="M23.28 3.86 L26.92 3.86 M25.10 3.18 L25.10 7.34 M23.12 5.78 L27.08 5.78 M23.80 4.48 L23.54 7.34" stroke="#222" stroke-width="0.88" fill="none"/><path d="M28.78 3.86 L32.42 3.86 M30.60 3.18 L30.60 7.34 M28.62 5.78 L32.58 5.78 M29.30 4.48 L29.04 7.34" stroke="#222" stroke-width="0.88" fill="none"/></svg>
</div>
<div class="r" style="left:735px;top:715.5px;width:310.3px;height:160px;background:#fff;border-radius:10px 10px 0 0;box-shadow:0 0 0 1px rgba(0,0,0,0.08);overflow:hidden;">
<div class="t" style="left:10.5px;top:8.04px;font-size:4.2px;line-height:4.2px;font-weight:bold;color:#222;letter-spacing:-0.022px;">Horizon</div>
<div class="t" style="left:28.0px;top:8.04px;font-size:4.2px;line-height:4.2px;color:#666;letter-spacing:-0.270px;">Shop</div>
<div class="t" style="left:42.0px;top:8.04px;font-size:4.2px;line-height:4.2px;color:#666;letter-spacing:-0.079px;">Contact</div>
<svg class="r" style="left:266px;top:7px;" width="30" height="8" viewBox="0 0 30 8"><circle cx="3" cy="3" r="2" stroke="#444" stroke-width="0.7" fill="none"/><circle cx="14" cy="2.4" r="1.3" fill="#555"/><path d="M11.5 6 Q14 3.5 16.5 6" fill="#555"/><rect x="23" y="2" width="4.5" height="4.5" rx="0.8" stroke="#444" stroke-width="0.7" fill="none"/></svg>
<div class="r" style="left:292.5px;top:5px;width:5px;height:5px;background:#111;border-radius:50%;"></div>
<svg class="r" style="left:0px;top:17.7px;" width="310.3" height="142.3" viewBox="0 0 310.3 142.3"><defs>
<linearGradient id="sky" x1="0" y1="0" x2="0" y2="1"><stop offset="0" stop-color="#d6d9dc"/><stop offset="1" stop-color="#a3a7ab"/></linearGradient>
<linearGradient id="lb" x1="0" y1="0" x2="1" y2="0"><stop offset="0" stop-color="#3a3e41"/><stop offset="0.6" stop-color="#4d5154"/><stop offset="1" stop-color="#6c6f72"/></linearGradient>
<linearGradient id="rb" x1="0" y1="0" x2="1" y2="0"><stop offset="0" stop-color="#9a7a68"/><stop offset="0.35" stop-color="#7a5442"/><stop offset="1" stop-color="#5a3a2e"/></linearGradient>
<linearGradient id="st" x1="0" y1="0" x2="0" y2="1"><stop offset="0" stop-color="#8a8683"/><stop offset="1" stop-color="#6a6664"/></linearGradient>
</defs>
<rect x="0" y="0" width="310.3" height="142.3" fill="url(#st)"/>
<rect x="120" y="0" width="80" height="100" fill="url(#sky)"/>
<path d="M0 0 L140 0 L140 80 L120 92 L0 108 Z" fill="url(#lb)"/>
<path d="M160 0 L310.3 0 L310.3 100 L240 90 L160 80 Z" fill="url(#rb)"/>
<path d="M140 0 L148 0 L148 70 L140 76 Z" fill="#7d8287"/>
<path d="M168 0 L178 0 L178 74 L168 76 Z" fill="#8e929a"/>
<g fill="#25292c" opacity="0.55"><rect x="4" y="25" width="5" height="78"/><rect x="20" y="27" width="5" height="76"/><rect x="36" y="29" width="5" height="72"/><rect x="52" y="31" width="4" height="66"/><rect x="66" y="33" width="4" height="62"/><rect x="80" y="35" width="4" height="56"/></g>
<g fill="#b67a5e" opacity="0.75"><rect x="240" y="34" width="5" height="58"/><rect x="256" y="30" width="6" height="64"/><rect x="273" y="26" width="6" height="68"/><rect x="291" y="22" width="6" height="74"/></g>
<path d="M0 120 L120 95 M230 95 L310.3 118" stroke="#3a3838" stroke-width="1.4"/>
<path d="M48 142.3 Q48 80 72 70 L98 60 Q110 66 124 60 L148 68 Q160 78 158 142.3 Z" fill="#3e5355"/>
<path d="M98 46 L100 62 Q111 68 124 62 L125 46 Z" fill="#c39a82"/>
<ellipse cx="110" cy="29" rx="14.5" ry="19" fill="#d4ab92"/>
<path d="M94 26 Q90 2 110 -1 Q132 -3 129 22 Q125 12 111 11 Q98 12 94 26 Z" fill="#241b17"/>
<path d="M155 142.3 Q154 76 170 68 L190 62 Q212 66 222 78 Q238 104 240 142.3 Z" fill="#a3b0cc"/>
<g fill="#52689e" opacity="0.55"><circle cx="172" cy="92" r="5"/><circle cx="192" cy="84" r="5"/><circle cx="210" cy="96" r="5"/><circle cx="184" cy="112" r="5"/><circle cx="206" cy="120" r="5"/><circle cx="168" cy="126" r="4"/><circle cx="226" cy="112" r="4"/><circle cx="196" cy="136" r="4"/></g>
<path d="M174 68 Q190 76 206 68 L202 60 Q190 64 178 60 Z" fill="#1e3a8a"/>
<path d="M158 80 Q156 30 168 18 Q182 6 200 14 Q216 26 212 72 L206 68 Q208 38 190 30 Q178 32 176 46 Q174 64 170 80 Z" fill="#4a2f24"/>
<ellipse cx="189" cy="40" rx="12" ry="16" fill="#e0c2ad"/></svg>
<div class="t" style="left:113.5px;top:93.52px;font-size:14.5px;line-height:14.5px;font-weight:bold;color:#fff;letter-spacing:-0.177px;">New arrivals</div>
<div class="r" style="left:150px;top:128.5px;width:26px;height:15px;border:1px solid rgba(255,255,255,0.6);border-radius:4px;box-sizing:border-box;"></div>
<div class="r" style="left:0px;top:144px;width:310.3px;height:20px;background:#fff;"></div>
</div>
<div class="r" style="left:1062px;top:716px;width:309px;height:160px;background:#fff;border-radius:12px 12px 0 0;overflow:hidden;">
<svg class="r" style="left:0px;top:0px;" width="309" height="140" viewBox="0 0 309 140"><defs><linearGradient id="rd" x1="0" y1="0" x2="0" y2="1"><stop offset="0" stop-color="#9a1c20"/><stop offset="1" stop-color="#8c171b"/></linearGradient></defs>
<rect x="0" y="0" width="309" height="140" fill="url(#rd)"/>
<rect x="0" y="117" width="309" height="23" fill="#c42c31"/>
<path d="M77 140 Q74 124 86 120 Q104 116 112 126 Q116 136 110 140 Z" fill="#b51c20"/>
<path d="M126 140 L128 118 Q122 104 132 94 Q146 86 154 100 L152 120 L158 140 Z" fill="#b41a1f"/>
<rect x="154.6" y="70" width="34.3" height="51" rx="4" fill="#231d1d"/>
<circle cx="171.2" cy="94.7" r="10" fill="#efe9e4"/>
<path d="M164 97 L171 89 L178 97 Z" fill="#c82a2f"/>
<rect x="194.4" y="59.3" width="36.6" height="80" rx="5" fill="#201b1b"/>
<path d="M202 59.5 L202 46 Q204 38 209 37 L216 37 Q221 38 223 46 L223 59.5 Z" fill="#c41f25"/>
<path d="M199 68 L226 68 M199 77 L226 77 M201 86 L224 86" stroke="#d8352f" stroke-width="3.2"/>
<circle cx="212.1" cy="111.3" r="10.5" fill="#efe9e4"/>
<path d="M205 114 L212 105 L219 114 Z" fill="#c82a2f"/>
<path d="M225.4 51.5 L243 77" stroke="#1a1a1a" stroke-width="2"/>
<path d="M233.2 77 Q233.2 93.6 249 93.6 Q265.2 93.6 265.2 77 Z" fill="#1b1717"/>
<ellipse cx="249" cy="76" rx="9" ry="3.6" fill="#caa96c"/>
<rect x="233" y="93.6" width="37.8" height="45.4" fill="#c8252a"/>
<rect x="252" y="93.6" width="18.8" height="45.4" fill="#a91d22"/>
<path d="M148 121 Q147 139 165.7 139 Q183.4 139 183.4 121 Z" fill="#c42a2e"/>
<ellipse cx="165.7" cy="121" rx="17.7" ry="3.5" fill="#d9c58c"/>
<path d="M250 139 L254 118 Q262 100 274 108 Q284 96 294 106 Q303 118 293 126 L303 139 Z" fill="#e6c26a"/>
<path d="M186 139 Q190 124 200 128 Q206 136 202 139 Z" fill="#d9b873"/></svg>
<svg class="r" style="left:268px;top:6px;" width="36" height="8" viewBox="0 0 36 8"><circle cx="7" cy="3.6" r="1.4" fill="#eee"/><circle cx="14" cy="3.4" r="1.3" fill="#eee"/><rect x="20" y="1.4" width="4.5" height="4.5" rx="1" fill="#eee"/></svg>
</div>
<div class="r" style="left:1056px;top:856px;width:340px;height:5px;background:#fff;"></div>
<div class="r" style="left:1067.6px;top:565.7px;width:199px;height:240.2px;background:#fff;border-radius:12px;box-shadow:0 0 0 1px rgba(0,0,0,0.07),0 4px 14px rgba(0,0,0,0.14);"></div>
<div class="r" style="left:1067.6px;top:612.7px;width:199px;height:1.2px;background:#e6e6e6;"></div>
<div class="t" style="left:1080.7px;top:583.48px;font-size:13.6px;line-height:13.6px;-webkit-text-stroke:0.1px #303030;color:#303030;letter-spacing:0.580px;">Preview</div>
<div class="t" style="left:1080.7px;top:631.48px;font-size:13.6px;line-height:13.6px;-webkit-text-stroke:0.1px #303030;color:#303030;letter-spacing:0.580px;">Rename</div>
<div class="t" style="left:1080.7px;top:667.98px;font-size:13.6px;line-height:13.6px;-webkit-text-stroke:0.1px #303030;color:#303030;letter-spacing:0.580px;">Duplicate</div>
<div class="t" style="left:1080.7px;top:703.68px;font-size:13.6px;line-height:13.6px;-webkit-text-stroke:0.1px #303030;color:#303030;letter-spacing:0.580px;">Download theme file</div>
<div class="t" style="left:1080.7px;top:740.28px;font-size:13.6px;line-height:13.6px;-webkit-text-stroke:0.1px #303030;color:#303030;letter-spacing:0.580px;">Edit code</div>
<div class="t" style="left:1080.7px;top:776.38px;font-size:13.6px;line-height:13.6px;-webkit-text-stroke:0.1px #303030;color:#303030;letter-spacing:0.580px;">Edit default theme content</div>
<div class="r" style="left:1071px;top:731.3px;width:170px;height:33.4px;border:2.7px solid #6aee4a;box-sizing:border-box;"></div>
</body></html>
